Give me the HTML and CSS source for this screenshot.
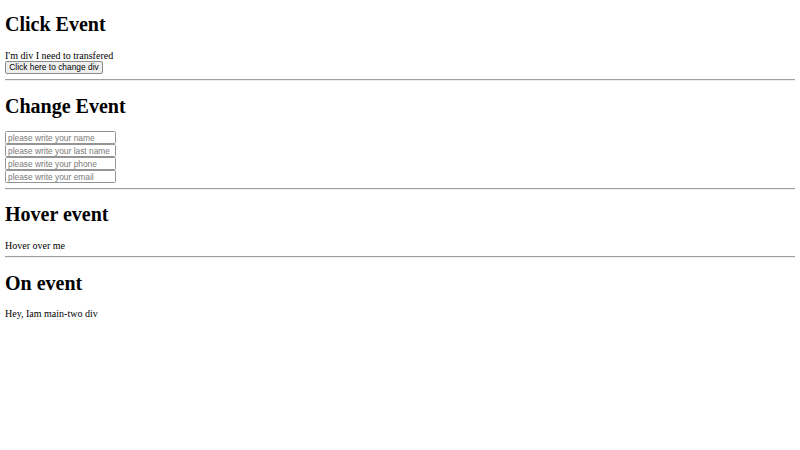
FILE: index.html
```html
<!DOCTYPE html>
<html>
<head>
<meta charset="utf-8">
<title>Events</title>
<link rel="stylesheet" href="styles.css">
</head>
<body class="page">
  <section class="block">
    <h1 class="title">Click Event</h1>
    <div class="text">I'm div I need to transfered</div>
    <button class="btn">Click here to change div</button>
  </section>
  <hr class="rule">
  <section class="block">
    <h1 class="title">Change Event</h1>
    <div class="fields">
      <input class="field" type="text" placeholder="please write your name">
      <input class="field" type="text" placeholder="please write your last name">
      <input class="field" type="text" placeholder="please write your phone">
      <input class="field" type="text" placeholder="please write your email">
    </div>
  </section>
  <hr class="rule">
  <section class="block">
    <h1 class="title">Hover event</h1>
    <div class="text">Hover over me</div>
  </section>
  <hr class="rule">
  <section class="block">
    <h1 class="title">On event</h1>
    <div class="text">Hey, Iam main-two div</div>
  </section>
</body>
</html>
```

FILE: styles.css
```css
html {
  background: #ffffff;
  margin: 0;
  padding: 0;
}
.page {
  display: flow-root;
  margin: 0;
  padding: 0 5px;
  font-family: "Liberation Serif", "Times New Roman", serif;
  font-size: 10px;
  color: #000;
}
.title {
  font-size: 20px;
  font-weight: bold;
  line-height: 23px;
  margin: 13.4px 0;
}
.text {
  line-height: 11.5px;
}
.btn {
  display: block;
  box-sizing: border-box;
  height: 13px;
  width: 98px;
  margin: 0;
  padding: 0 3px;
  font-family: "Liberation Sans", Arial, sans-serif;
  font-size: 8.4px;
  line-height: 11px;
  color: #000;
  background: #efefef;
  border: 1px solid #8a8a8a;
  border-radius: 2px;
}
.fields {
  display: flex;
  flex-direction: column;
  align-items: flex-start;
}
.field {
  box-sizing: border-box;
  width: 111px;
  height: 13px;
  margin: 0;
  padding: 0 2px;
  font-family: "Liberation Sans", Arial, sans-serif;
  font-size: 8.4px;
  border: 1px solid #949494;
  border-radius: 1.5px;
  background: #fff;
}
.field::placeholder {
  color: #7a7a7a;
}
.rule {
  margin: 5px 0;
  border: 0;
  border-top: 1px solid #a0a0a0;
  border-bottom: 1px solid #eeeeee;
  height: 0;
}
```
